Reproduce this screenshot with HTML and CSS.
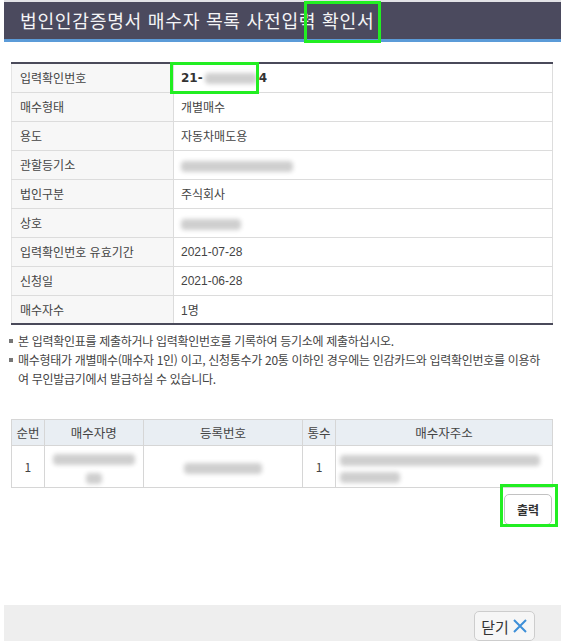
FILE: index.html
```html
<!DOCTYPE html>
<html lang="ko">
<head>
<meta charset="utf-8">
<title>법인인감증명서 매수자 목록 사전입력 확인서</title>
<link rel="stylesheet" href="styles.css">
</head>
<body>
<div class="page">
  <div class="header"><h1 class="title">법인인감증명서 매수자 목록 사전입력 확인서</h1></div>
  <div class="content">
    <table class="info">
      <tr><th>입력확인번호</th><td class="strong">21-<span class="blur w52"></span>4</td></tr>
      <tr><th>매수형태</th><td>개별매수</td></tr>
      <tr><th>용도</th><td>자동차매도용</td></tr>
      <tr><th>관할등기소</th><td><span class="blur w110"></span></td></tr>
      <tr><th>법인구분</th><td>주식회사</td></tr>
      <tr><th>상호</th><td><span class="blur w60"></span></td></tr>
      <tr><th>입력확인번호 유효기간</th><td class="num">2021-07-28</td></tr>
      <tr><th>신청일</th><td class="num">2021-06-28</td></tr>
      <tr><th>매수자수</th><td class="num">1명</td></tr>
    </table>
    <ul class="notes">
      <li>본 입력확인표를 제출하거나 입력확인번호를 기록하여 등기소에 제출하십시오.</li>
      <li>매수형태가 개별매수(매수자 1인) 이고, 신청통수가 20통 이하인 경우에는 인감카드와 입력확인번호를 이용하<br>여 무인발급기에서 발급하실 수 있습니다.</li>
    </ul>
    <table class="list">
      <tr class="head"><th class="c1">순번</th><th class="c2">매수자명</th><th class="c3">등록번호</th><th class="c4">통수</th><th class="c5">매수자주소</th></tr>
      <tr class="body">
        <td>1</td>
        <td><span class="blur w85"></span><br><span class="blur w16"></span></td>
        <td><span class="blur w80"></span></td>
        <td>1</td>
        <td class="addr"><span class="blur w200"></span><br><span class="blur w60"></span></td>
      </tr>
    </table>
    <div class="actions"><button class="btn">출력</button></div>
  </div>
  <div class="footer"><button class="close">닫기 <svg class="x" width="16" height="16" viewBox="0 0 16 16"><path d="M2 2 L14 14 M14 2 L2 14" stroke="#3d8fd8" stroke-width="2" fill="none"/></svg></button></div>
  <div class="mark m1"></div>
  <div class="mark m2"></div>
  <div class="mark m3"></div>
</div>
</body>
</html>
```
FILE: styles.css
```css
* { box-sizing: border-box; }
html, body { margin: 0; padding: 0; background: #fff; }
body { font-family: "Noto Sans CJK KR", "Noto Sans", sans-serif; color: #444; font-size: 12px; }
.page { position: relative; width: 568px; height: 641px; }
.header {
  margin-left: 4px; width: 557px; height: 42px;
  background: #4b4a5e;
  border-top: 2px solid #e2e2e6;
  border-bottom: 3px solid #5b9bd8;
  display: flex; align-items: center;
  padding-left: 16px;
}
.title { margin: 0; font-size: 18.2px; font-weight: 400; color: #f4f4f6; letter-spacing: 0.7px; line-height: 1; }
.content { padding: 20px 15px 0 11px; }
table { border-collapse: collapse; width: 542px; }
.info { border-top: 2px solid #4a4a5a; border-bottom: 2px solid #4a4a5a; border-right: 1px solid #ddd; }
.info th {
  width: 162px; height: 29px; background: #f7f7f7; text-align: left; font-weight: normal;
  padding: 0 8px; border-bottom: 1px solid #dcdcdc; border-right: 1px solid #dcdcdc; color: #444;
  border-left: 1px solid #e4e4e4;
}
.info td { height: 29px; padding: 0 8px 0 7px; border-bottom: 1px solid #dcdcdc; color: #444; }
.info tr:last-child th, .info tr:last-child td { border-bottom: none; }
.info td.strong { font-weight: bold; font-family: "DejaVu Sans", sans-serif; font-size: 12px; color: #333; }
.info td.num { font-family: "Liberation Sans", "Noto Sans CJK KR", sans-serif; font-size: 12px; }
.blur { display: inline-block; height: 11px; background: #cfcfcf; filter: blur(2px); vertical-align: middle; border-radius: 4px; }
.w52 { width: 52px; margin: 0 2px; }
.w110 { width: 112px; }
.w60 { width: 60px; }
.w85 { width: 82px; }
.w16 { width: 16px; margin-top: 3px; }
.w80 { width: 78px; }
.w200 { width: 200px; }
.notes { list-style: none; margin: 6px 0 0 0; padding: 0; font-size: 12px; color: #444; line-height: 19px; letter-spacing: -0.3px; }
.notes li { position: relative; padding-left: 9px; margin-left: -2px; }
.notes li::before { content: ""; position: absolute; left: 0; top: 8px; width: 4px; height: 4px; background: #777; }
.list { margin-top: 31px; border: 1px solid #d6d6d6; }
.list th, .list td { border: 1px solid #d6d6d6; text-align: center; font-weight: normal; }
.list .head th { height: 26px; background: #e9eef3; color: #444; font-size: 12.5px; }
.list .body td { height: 42px; background: #fff; color: #444; }
.c1 { width: 33px; }
.c2 { width: 99px; }
.c3 { width: 160px; }
.c4 { width: 33px; }
.c5 { width: 217px; }
.addr { text-align: left !important; padding-left: 4px; }
.actions { display: flex; justify-content: flex-end; padding-top: 6px; padding-right: 1px; }
.btn {
  width: 48px; height: 31px; border: 1px solid #c2c2c2; border-radius: 5px; background: #fff;
  font-family: "Noto Sans CJK KR", sans-serif; font-size: 12px; font-weight: bold; color: #333; padding: 0;
}
.footer {
  position: absolute; left: 4px; top: 605px; width: 557px; height: 36px; background: #eeeeee;
  display: flex; justify-content: flex-end; align-items: flex-start; padding: 6px 26px 0 0;
}
.close {
  height: 30px; width: 61px; border: 1px solid #cdcdcd; border-radius: 5px; background: #f6f6f6;
  display: flex; align-items: center; justify-content: center; gap: 3px; padding: 0;
  font-family: "Noto Sans CJK KR", sans-serif; font-size: 15px; color: #333;
}
.x { display: block; }
.mark { position: absolute; border: 3px solid #22ee22; }
.m1 { left: 304px; top: 1px; width: 77px; height: 42px; }
.m2 { left: 170px; top: 62px; width: 89px; height: 32px; }
.m3 { left: 500px; top: 484px; width: 58px; height: 43px; }
```
